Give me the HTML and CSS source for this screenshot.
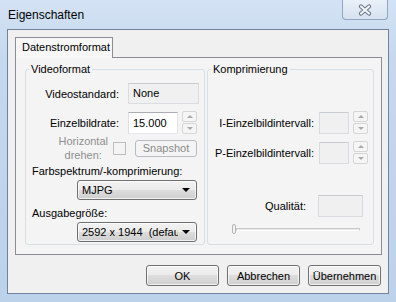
FILE: index.html
```html
<!DOCTYPE html>
<html lang="de">
<head>
    <meta charset="UTF-8">
    <title>Eigenschaften</title>
    <link rel="stylesheet" href="styles.css">
</head>
<body>
    <div class="window">
        <div class="titlebar">
            <span class="title">Eigenschaften</span>
            <div class="close">
                <svg width="14" height="12" viewBox="0 0 14 12">
                    <path d="M3 2.5 L11 9.5 M11 2.5 L3 9.5" stroke="#6b7787" stroke-width="4.2" stroke-linecap="round"/>
                    <path d="M3 2.5 L11 9.5 M11 2.5 L3 9.5" stroke="#f4f6f9" stroke-width="2.2" stroke-linecap="round"/>
                </svg>
            </div>
        </div>

        <div class="client">
            <div class="tabs">
                <div class="tab active">Datenstromformat</div>
            </div>

            <div class="page">
                <!-- Videoformat -->
                <fieldset class="group video">
                    <legend>Videoformat</legend>
                    <div class="row std-row">
                        <label class="lbl">Videostandard:</label>
                        <div class="field readonly std">None</div>
                    </div>
                    <div class="row rate-row">
                        <label class="lbl">Einzelbildrate:</label>
                        <div class="field edit rate">15.000</div>
                        <div class="spin"><span class="up"></span><span class="down"></span></div>
                    </div>
                    <div class="row flip-row">
                        <div class="flip-lbl"><span class="disabled">Horizontal<br>drehen:</span></div>
                        <span class="check"></span>
                        <span class="btn snapshot">Snapshot</span>
                    </div>
                    <div class="caption first">Farbspektrum/-komprimierung:</div>
                    <div class="combo"><span class="value">MJPG</span><i class="arrow"></i></div>
                    <div class="caption">Ausgabegröße:</div>
                    <div class="combo"><span class="value">2592 x 1944  (defau</span><i class="arrow"></i></div>
                </fieldset>

                <!-- Komprimierung -->
                <fieldset class="group compress">
                    <legend>Komprimierung</legend>
                    <div class="row right i-row">
                        <label class="lbl-r">I-Einzelbildintervall:</label>
                        <div class="field off interval"></div>
                        <div class="spin"><span class="up"></span><span class="down"></span></div>
                    </div>
                    <div class="row right p-row">
                        <label class="lbl-r">P-Einzelbildintervall:</label>
                        <div class="field off interval"></div>
                        <div class="spin"><span class="up"></span><span class="down"></span></div>
                    </div>
                    <div class="row right q-row">
                        <label class="lbl-q">Qualität:</label>
                        <div class="field off quality"></div>
                    </div>
                    <div class="slider">
                        <span class="thumb"></span>
                        <span class="track"></span>
                    </div>
                </fieldset>
            </div>

            <div class="buttons">
                <button class="btn">OK</button>
                <button class="btn">Abbrechen</button>
                <button class="btn">Übernehmen</button>
            </div>
        </div>
    </div>
</body>
</html>
```

FILE: styles.css
```css
/* Grundlayout */
body {
    margin: 0;
    font-family: "Liberation Sans", Arial, sans-serif;
    font-size: 11px;
    color: #000;
}

.window {
    width: 396px;
    height: 302px;
    display: flex;
    flex-direction: column;
    overflow: hidden;
    background: linear-gradient(#d4e3f4, #c4d8ee 60px, #bcd2eb);
}

/* Titelleiste */
.titlebar {
    height: 29px;
    flex: none;
    display: flex;
    justify-content: space-between;
    align-items: flex-start;
}

.title {
    font-size: 12px;
    line-height: 14px;
    margin: 8px 0 0 8px;
}

.close {
    width: 46px;
    height: 20px;
    margin-right: 8px;
    box-sizing: border-box;
    border: 1px solid #93a6bf;
    border-top: none;
    border-radius: 0 0 4px 4px;
    background: linear-gradient(#e9f0f8, #d6e2f0);
    display: flex;
    align-items: center;
    justify-content: center;
}

/* Fensterinhalt */
.client {
    margin: 0 7px;
    height: 265px;
    box-sizing: border-box;
    border: 1px solid #71839a;
    background: #f0f0f0;
    padding: 7px 6px 0 7px;
    display: flex;
    flex-direction: column;
}

.tabs {
    display: flex;
    height: 20px;
}

.tab {
    width: 98px;
    height: 21px;
    box-sizing: border-box;
    border: 1px solid #898c95;
    border-bottom: none;
    background: #f7f7f7;
    padding-left: 6px;
    line-height: 19px;
    position: relative;
    z-index: 1;
}

.page {
    height: 198px;
    box-sizing: border-box;
    border: 1px solid #898c95;
    background: #f4f4f4;
    padding: 5px 7px 0 9px;
    display: flex;
    gap: 2px;
}

/* Gruppenrahmen */
.group {
    margin: 0;
    padding: 0;
    height: 182px;
    box-sizing: border-box;
    border: 1px solid #d5dfe5;
    border-radius: 3px;
    min-width: 0;
}

.group legend {
    padding: 0 2px;
    margin-left: 3px;
    line-height: 13px;
}

.video {
    width: 180px;
}

.compress {
    width: 167px;
}

.row {
    display: flex;
    align-items: center;
}

.lbl {
    width: 93px;
    text-align: right;
    margin-right: 9px;
}

.std-row {
    margin-top: 7px;
}

.rate-row {
    margin-top: 7px;
}

.flip-row {
    height: 28px;
}

.flip-lbl {
    width: 82px;
    display: flex;
    justify-content: flex-end;
    text-align: center;
    line-height: 14px;
}

.disabled {
    color: #8f8f8f;
}

.caption {
    padding-left: 6px;
    line-height: 14px;
    margin-top: 6px;
}

.caption.first {
    margin-top: 2px;
}

/* Eingabefelder */
.field {
    box-sizing: border-box;
    height: 21px;
    line-height: 19px;
    padding-left: 4px;
    border: 1px solid #d5d8dc;
}

.readonly {
    width: 71px;
    background: #f0f0f0;
    border-color: #c9ccd1 #dadce0 #dadce0 #dadce0;
}

.edit {
    width: 50px;
    height: 22px;
    line-height: 20px;
    background: #fff;
    border-color: #abadb3 #e2e3ea #e3e9ef #dbdfe6;
}

.off {
    background: #f0f0f0;
    border-color: #c9ccd1 #d9dbde #d9dbde #d9dbde;
    height: 22px;
}

.interval {
    width: 30px;
}

.quality {
    width: 45px;
}

.spin {
    display: flex;
    flex-direction: column;
    gap: 1px;
    margin-left: 4px;
}

.spin span {
    width: 15px;
    height: 11px;
    box-sizing: border-box;
    border: 1px solid #d6d6d6;
    border-radius: 2px;
    background: #f5f5f5;
    display: flex;
    align-items: center;
    justify-content: center;
}

.spin span::after {
    content: "";
    border-left: 3px solid transparent;
    border-right: 3px solid transparent;
}

.spin .up::after {
    border-bottom: 3px solid #a9a9a9;
}

.spin .down::after {
    border-top: 3px solid #a9a9a9;
}

.check {
    width: 13px;
    height: 13px;
    box-sizing: border-box;
    border: 1px solid #bdbdbd;
    background: #f4f4f4;
    margin-left: 5px;
}

/* Schaltflächen und Auswahllisten */
.btn,
.combo {
    box-sizing: border-box;
    border: 1px solid #707070;
    border-radius: 3px;
    background: linear-gradient(#f2f2f2 0%, #ebebeb 50%, #dddddd 50%, #cfcfcf 100%);
    box-shadow: inset 0 0 0 1px rgba(255, 255, 255, 0.7);
    font-family: inherit;
    font-size: 11px;
    color: #000;
}

.btn.snapshot {
    width: 62px;
    height: 17px;
    line-height: 15px;
    text-align: center;
    margin-left: 9px;
    color: #8a8a8a;
    border-color: #b8bcbf;
    background: #f4f4f4;
    box-shadow: none;
}

.combo {
    width: 120px;
    height: 20px;
    margin: 2px 0 0 51px;
    display: flex;
    align-items: center;
    padding: 0 6px 0 4px;
}

.combo + .caption {
    margin-top: 6px;
}

.combo .value {
    flex: 1;
    overflow: hidden;
    white-space: pre;
}

.combo .arrow {
    width: 0;
    height: 0;
    margin-left: 4px;
    border-left: 4px solid transparent;
    border-right: 4px solid transparent;
    border-top: 4px solid #000;
}

/* Komprimierung rechts */
.right {
    justify-content: flex-end;
}

.i-row {
    margin-top: 35px;
    padding-right: 5px;
}

.p-row {
    margin-top: 7px;
    padding-right: 5px;
}

.q-row {
    margin-top: 31px;
    padding-right: 10px;
}

.lbl-r {
    margin-right: 5px;
}

.lbl-q {
    margin-right: 12px;
}

.slider {
    display: flex;
    align-items: center;
    height: 10px;
    margin: 7px 0 0 24px;
}

.thumb {
    width: 4px;
    height: 10px;
    box-sizing: border-box;
    border: 1px solid #b5b5b5;
    border-radius: 2px;
    background: #f4f4f4;
}

.track {
    width: 124px;
    height: 3px;
    box-sizing: border-box;
    border: 1px solid #c8c8c8;
    border-bottom-color: #fff;
    background: #e7eaea;
}

/* Dialogschaltflächen */
.buttons {
    display: flex;
    justify-content: flex-end;
    gap: 8px;
    margin-top: 10px;
    margin-right: 1px;
}

.buttons .btn {
    width: 73px;
    height: 21px;
    padding: 0;
}
```
